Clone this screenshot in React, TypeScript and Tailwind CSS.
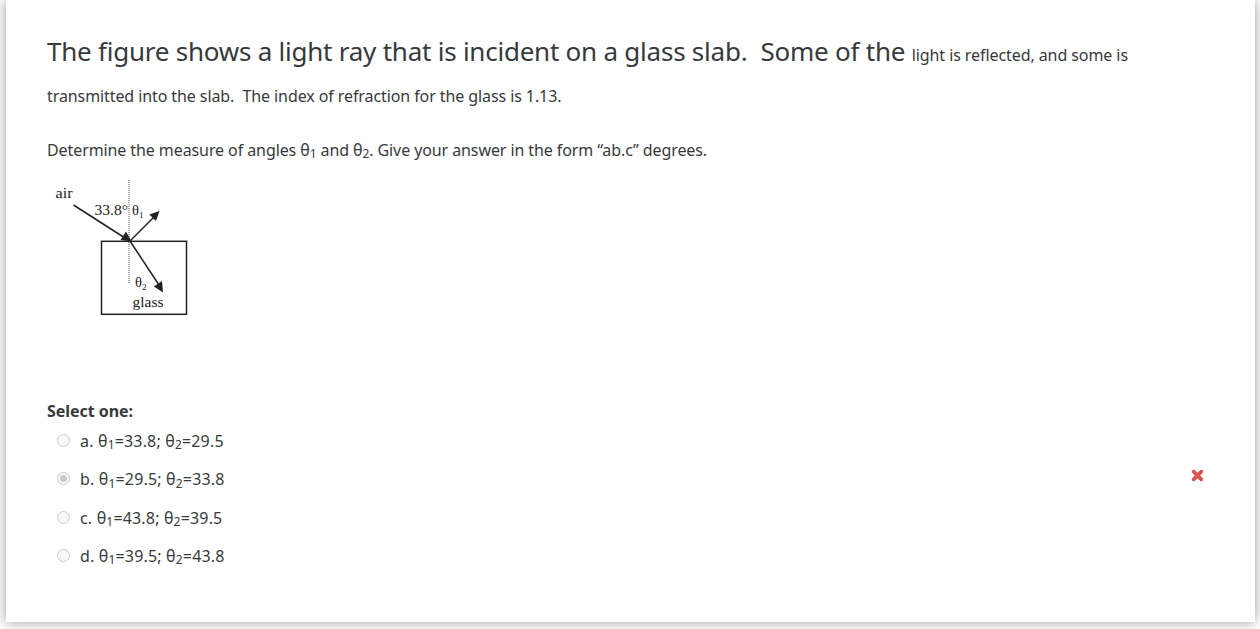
import type { ReactNode } from 'react';

type Choice = {
  letter: string;
  first: string;
  second: string;
};

const CHOICES: Choice[] = [
  { letter: 'a', first: '33.8', second: '29.5' },
  { letter: 'b', first: '29.5', second: '33.8' },
  { letter: 'c', first: '43.8', second: '39.5' },
  { letter: 'd', first: '39.5', second: '43.8' },
];

const SELECTED = 'b';

const Sub = ({ children }: { children: ReactNode }) => (
  <sub className="bottom-[-0.18em] text-[75%] leading-none">{children}</sub>
);

const Radio = ({ checked }: { checked: boolean }) => (
  <span
    role="radio"
    aria-checked={checked}
    className="mb-px flex size-[13px] shrink-0 items-center justify-center rounded-full border border-[#cbcbcb] bg-[#f8f8f8]"
  >
    {checked && <span className="size-[7px] rounded-full bg-[#cbcbcb]" />}
  </span>
);

const SlabFigure = () => (
  <svg
    width="160"
    height="150"
    viewBox="0 0 160 150"
    className="block font-['Liberation_Serif',serif]"
    fill="#222"
    stroke="none"
  >
    <g stroke="#222" fill="none" strokeWidth="1.5">
      <rect x="54.5" y="66.3" width="85" height="73" />
      <path d="M26.5 30L78 63" />
      <path d="M83 66L108 41" />
      <path d="M83 66L112 110" />
    </g>
    <path d="M82 5V108" stroke="#555" strokeWidth="1" strokeDasharray="1 1" />
    <path d="M84.5 66.5L73.5 65L79 56.5Z" />
    <path d="M112.5 36L109 46L102.3 39.5Z" />
    <path d="M116 117.5L106.8 111.5L115 106Z" />
    <g fontSize="14.5">
      <text x="8.5" y="22.5" textLength="17" lengthAdjust="spacingAndGlyphs">air</text>
      <text x="47.5" y="40" textLength="33.5" lengthAdjust="spacingAndGlyphs">33.8°</text>
      <text x="85" y="40">θ<tspan fontSize="9" dy="2.5">1</tspan></text>
      <text x="88" y="112">θ<tspan fontSize="9" dy="2.5">2</tspan></text>
      <text x="85.5" y="132" textLength="31" lengthAdjust="spacingAndGlyphs">glass</text>
    </g>
  </svg>
);

const WrongMark = () => (
  <svg width="13" height="13" viewBox="0 0 13 13" className="mr-[51px] mb-[7px] block">
    <path d="M2.7 2.7L10.3 10.3M10.3 2.7L2.7 10.3" stroke="#d9534f" strokeWidth="3.8" strokeLinecap="round" />
  </svg>
);

export default function App() {
  return (
    <div className="flex h-[629px] w-[1260px] overflow-hidden bg-white pl-[6px] font-['Noto_Sans',sans-serif] text-[16px] text-[#373a3c]">
      <main className="h-[622px] w-[1249px] bg-white pl-[41px] shadow-[0_0_12px_rgba(0,0,0,0.4)]">
        <div className="h-[128px] pt-[31px]">
          <p className="flex h-[41px] items-baseline whitespace-pre leading-[40px]">
            <span className="text-[26px] tracking-[-0.235px]">The figure shows a light ray that is incident on a glass slab.&nbsp; Some of the </span>
            <span className="tracking-[-0.08px]">light is reflected, and some is</span>
          </p>
          <p className="whitespace-pre leading-[48px] tracking-[-0.09px]">
            transmitted into the slab.&nbsp; The index of refraction for the glass is 1.13.
          </p>
        </div>

        <p className="flex h-[47px] items-center whitespace-pre pb-[3px] leading-6 tracking-[-0.09px]">
          <span>
            Determine the measure of angles θ<Sub>1</Sub> and θ<Sub>2</Sub>. Give your answer in the form “ab.c” degrees.
          </span>
        </p>

        <SlabFigure />

        <section className="pt-[74px]">
          <h2 className="h-[23px] text-[16px] font-bold leading-6 tracking-[-0.05px]">Select one:</h2>
          <div className="flex flex-col">
            {CHOICES.map(({ letter, first, second }) => (
              <div key={letter} className="flex h-[38.3px] items-center pl-[10px]">
                <Radio checked={letter === SELECTED} />
                <span className="ml-[10px] flex-1 whitespace-pre leading-6 tracking-[0.17px]">
                  {letter}. θ<Sub>1</Sub>={first}; θ<Sub>2</Sub>={second}
                </span>
                {letter === SELECTED && <WrongMark />}
              </div>
            ))}
          </div>
        </section>
      </main>
    </div>
  );
}
